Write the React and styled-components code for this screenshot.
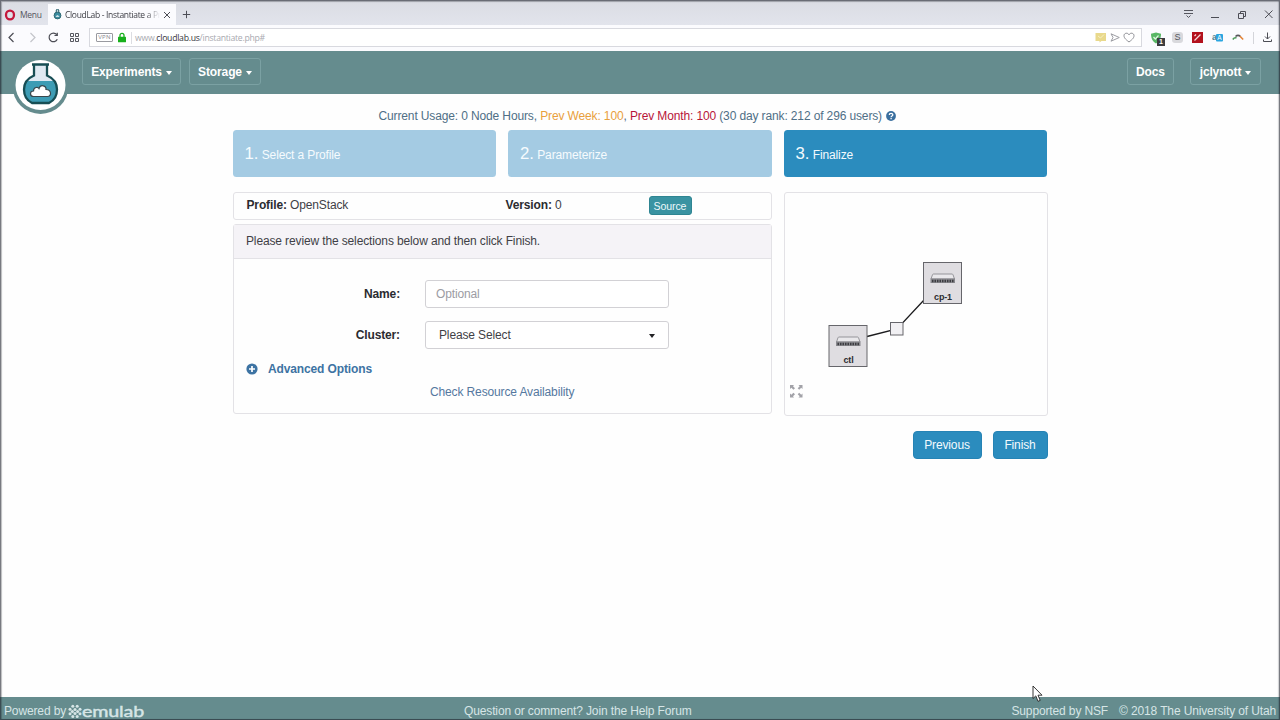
import styled, { createGlobalStyle, css } from "styled-components";

const GlobalStyle = createGlobalStyle`
  * {
    box-sizing: border-box;
  }

  body {
    margin: 0;
    overflow: hidden;
    font-family: "Liberation Sans", Arial, sans-serif;
    font-size: 12px;
    letter-spacing: -0.13px;
    color: #3f3f46;
  }

  button,
  input {
    letter-spacing: inherit;
  }

  svg {
    display: block;
    flex-shrink: 0;
  }
`;

const Window = styled.div`
  width: 1280px;
  height: 720px;
  display: flex;
  flex-direction: column;
  position: relative;
  background-color: #fefefe;
  &::after {
    content: "";
    position: absolute;
    inset: 0;
    pointer-events: none;
    border: solid rgba(30, 34, 44, 0.6);
    border-width: 1px;
    box-shadow: inset 1px 1px 1px rgba(30, 34, 44, 0.3),
      inset -1px 0 1px rgba(30, 34, 44, 0.2);
  }
`;

const TitleBar = styled.div`
  height: 25px;
  padding-top: 4px;
  display: flex;
  align-items: stretch;
  background: linear-gradient(#dadce3, #e2e4ec);
  font-family: "Open Sans", sans-serif;
  font-size: 8.5px;
  letter-spacing: -0.32px;
  color: #55565e;
`;

const MenuButton = styled.div`
  width: 48px;
  padding: 0 0 0 4px;
  display: flex;
  align-items: center;
  gap: 4px;
`;

const Tab = styled.div`
  width: 128px;
  padding: 0 6px 0 5px;
  display: flex;
  align-items: center;
  gap: 3px;
  background-color: #fbfbfe;
  color: #3c3d44;
`;

const TabTitle = styled.span`
  width: 95px;
  flex-shrink: 0;
  white-space: nowrap;
  mask-image: linear-gradient(to right, #000 85%, transparent);
`;

const NewTab = styled.div`
  padding-left: 6px;
  display: flex;
  align-items: center;
`;

const WindowButtons = styled.div`
  margin-left: auto;
  padding-right: 5px;
  display: flex;
  align-items: center;
  gap: 15px;
`;

const AddressBar = styled.div`
  height: 26px;
  padding: 2px 6px 3px 6px;
  display: flex;
  align-items: center;
  background-color: #fbfbfe;
`;

const NavIcons = styled.div`
  width: 83px;
  display: flex;
  align-items: center;
  gap: 10px;
`;

const UrlField = styled.div`
  width: 1053px;
  height: 19px;
  padding: 0 6px;
  display: flex;
  align-items: center;
  gap: 4px;
  border: 1px solid #d8d9df;
  background-color: #fff;
  font-family: "Open Sans", sans-serif;
  font-size: 8.7px;
  letter-spacing: -0.28px;
  color: #a8a9af;
`;

const Vpn = styled.span`
  width: 17px;
  height: 9px;
  border: 1px solid #999aa0;
  border-radius: 1px;
  font-size: 6px;
  line-height: 7px;
  letter-spacing: 0.3px;
  text-align: center;
  color: #85868c;
`;

const Url = styled.span`
  padding-left: 3px;
  border-left: 1px solid #dcdde2;
  line-height: 12px;
`;

const Domain = styled.span`
  color: #35363c;
`;

const FieldIcons = styled.div`
  margin-left: auto;
  display: flex;
  align-items: center;
  gap: 3px;
`;

const Extensions = styled.div`
  margin-left: auto;
  display: flex;
  align-items: center;
  gap: 9px;
`;

const Shield = styled.div`
  position: relative;
`;

const ShieldBadge = styled.span`
  position: absolute;
  left: 6px;
  top: 6px;
  width: 8px;
  height: 8px;
  background-color: #3c3c40;
  color: #fff;
  font-size: 7px;
  font-weight: 700;
  line-height: 8px;
  text-align: center;
`;

const Extension = styled.span`
  width: 11px;
  height: 11px;
  border-radius: ${(props) => (props.$round ? "3px" : "0")};
  background-color: ${(props) => props.$bg};
  color: ${(props) => props.$color};
  font-size: 9px;
  line-height: 11px;
  text-align: center;
`;

const Separator = styled.span`
  width: 1px;
  height: 12px;
  background-color: #d4d5da;
`;

const Navbar = styled.nav`
  height: 43px;
  padding: 7px 19px 0 82px;
  position: relative;
  display: flex;
  align-items: flex-start;
  gap: 8px;
  background-color: #658c8e;
`;

const Logo = styled.svg`
  position: absolute;
  left: 12px;
  top: 6px;
`;

const NavButton = styled.button`
  width: ${(props) => props.$width}px;
  height: 27px;
  padding: 0;
  margin-left: ${(props) => props.$offset || "0"};
  display: flex;
  align-items: center;
  justify-content: center;
  gap: 4px;
  border: 1px solid #7ba1a3;
  border-radius: 3px;
  background: none;
  color: #fff;
  font-family: inherit;
  font-size: 12px;
  font-weight: 700;
`;

const Caret = styled.span`
  margin-top: 2px;
  border: solid transparent;
  border-width: 4px 3px 0;
  border-top-color: ${(props) => props.$color || "#fff"};
`;

const Main = styled.main`
  flex: 1;
  width: 815px;
  margin-left: 232.5px;
  padding-top: 14.5px;
`;

const Usage = styled.div`
  margin: 0 0 6.5px 146px;
  height: 15px;
  display: flex;
  align-items: center;
  white-space: pre;
  color: #4f6f86;
`;

const UsageAmount = styled.span`
  color: ${(props) => props.$color};
`;

const HelpIcon = styled.svg`
  margin-left: 4px;
`;

const Steps = styled.div`
  display: grid;
  grid-template-columns: repeat(3, 263.5px);
  column-gap: 12px;
`;

const Step = styled.div`
  height: 47px;
  padding: 0 12px;
  border-radius: 3.5px;
  background-color: ${(props) => (props.$active ? "#2b8cbe" : "#a4cbe3")};
  color: ${(props) => (props.$active ? "#f4fafd" : "#f6fbfe")};
  line-height: 47px;
`;

const StepNumber = styled.span`
  font-size: 16.8px;
  margin-right: 3.5px;
`;

const Columns = styled.div`
  margin-top: 15px;
  display: flex;
  align-items: flex-start;
  gap: 12px;
`;

const box = css`
  border: 1px solid #e3e2e6;
  border-radius: 3px;
`;

const FormColumn = styled.div`
  width: 539px;
  display: flex;
  flex-direction: column;
  gap: 4px;
`;

const ProfileBar = styled.div`
  ${box}
  height: 28px;
  padding: 0 13px;
  display: grid;
  grid-template-columns: 259px 144px auto;
  justify-items: start;
  line-height: 24px;
`;

const Strong = styled.strong`
  color: #2b2b30;
`;

const SourceButton = styled.button`
  width: 43px;
  height: 19px;
  margin: 3px 0 0 -1px;
  padding: 0;
  border: 1px solid #2f8592;
  border-radius: 3px;
  background-color: #3a93a2;
  color: #eef8fa;
  font-family: inherit;
  font-size: 10.6px;
`;

const Panel = styled.section`
  ${box}
  height: 190px;
`;

const PanelHeader = styled.div`
  height: 34px;
  padding-left: 12.5px;
  border-bottom: 1px solid #e3e2e6;
  background-color: #f5f3f7;
  line-height: 33px;
`;

const FormRow = styled.div`
  height: 28px;
  margin-top: ${(props) => props.$gap}px;
  display: grid;
  grid-template-columns: 166.5px 244px;
  column-gap: 25px;
  align-items: center;
`;

const Label = styled.label`
  text-align: right;
  font-weight: 700;
  color: #2b2b30;
`;

const NameInput = styled.input`
  ${box}
  height: 28px;
  padding: 0 10px;
  border-color: #d2d1d5;
  background-color: #fff;
  font-family: inherit;
  font-size: 12px;
  outline: none;
  &::placeholder {
    color: #9c9ca3;
  }
`;

const ClusterSelect = styled.div`
  ${box}
  height: 28px;
  padding: 0 13.5px 0 13px;
  display: flex;
  align-items: center;
  justify-content: space-between;
  border-color: #d2d1d5;
  background-color: #fff;
`;

const AdvancedOptions = styled.div`
  margin: 12px 0 0 12.5px;
  height: 15px;
  display: flex;
  align-items: center;
  gap: 10px;
  font-weight: 700;
  color: #3d73a3;
`;

const AvailabilityLink = styled.div`
  margin: 9px 0 0 196.5px;
  line-height: 14px;
  color: #55789f;
`;

const Topology = styled.div`
  ${box}
  width: 264px;
  height: 224px;
`;

const Actions = styled.div`
  margin-top: 15px;
  display: flex;
  justify-content: flex-end;
  gap: 11px;
`;

const ActionButton = styled.button`
  width: ${(props) => props.$width}px;
  height: 28px;
  padding: 0;
  border: 1px solid #2583b5;
  border-radius: 4px;
  background-color: #2b8cbe;
  color: #f4fafd;
  font-family: inherit;
  font-size: 12px;
`;

const Footer = styled.footer`
  height: 23px;
  padding: 4px 4px 0;
  display: grid;
  grid-template-columns: 460px 1fr auto auto;
  align-items: center;
  background-color: #658c8e;
  color: #d6e5e6;
  line-height: 18px;
`;

const PoweredBy = styled.div`
  display: flex;
  align-items: center;
  gap: 2px;
`;

const Copyright = styled.span`
  margin-left: 11px;
`;

const Cursor = styled.svg`
  position: absolute;
  left: 1032px;
  top: 685px;
`;

const nodes = [
  { name: "cp-1", x: 138.5, y: 69.5 },
  { name: "ctl", x: 44, y: 132.5 },
];

function ServerNode({ name, x, y }) {
  return (
    <g transform={`translate(${x} ${y})`}>
      <rect width="38" height="41" fill="#dfdde1" stroke="#66666b" />
      <path
        d="M7.5 16.5 L9 12.2 Q9.3 11.5 10 11.5 H28.5 Q29.2 11.5 29.5 12.2 L31 16.5 Z"
        fill="#e9e8eb"
        stroke="#8d8d92"
        strokeWidth="0.9"
      />
      <rect x="7" y="16" width="24.5" height="4.5" fill="#88888d" />
      <path
        d="M8.5 18.5 H30.5"
        stroke="#3c3c41"
        strokeWidth="2.5"
        strokeDasharray="1.5 1"
      />
      <text
        x="19.5"
        y="37.8"
        textAnchor="middle"
        fontSize="9"
        fontWeight="700"
        fill="#2c2c30"
      >
        {name}
      </text>
    </g>
  );
}

function TopologyView() {
  return (
    <Topology>
      <svg width="262" height="222">
        <path
          d="M82 143.5 L112 136 L139 107"
          fill="none"
          stroke="#1c1c1e"
          strokeWidth="1.3"
        />
        <rect
          x="105.5"
          y="129.5"
          width="12.5"
          height="12.5"
          fill="#f1f0f3"
          stroke="#66666b"
        />
        {nodes.map((node) => (
          <ServerNode key={node.name} {...node} />
        ))}
        <g fill="#a2a2a8" transform="translate(4.5 191.5)">
          <path d="M0.5 0.5 H4.5 L3.5 1.7 L5.5 3.7 L3.9 5.2 L1.9 3.2 L0.5 4.5 Z" />
          <path d="M13 0.5 V4.5 L11.7 3.2 L9.7 5.2 L8.2 3.7 L10.2 1.7 L9 0.5 Z" />
          <path d="M0.5 13 V9 L1.9 10.3 L3.9 8.3 L5.5 9.8 L3.5 11.8 L4.5 13 Z" />
          <path d="M13 13 H9 L10.2 11.8 L8.2 9.8 L9.7 8.3 L11.7 10.3 L13 9 Z" />
        </g>
      </svg>
    </Topology>
  );
}

function CloudLabLogo() {
  return (
    <Logo width="57" height="58" viewBox="0 0 57 58">
      <circle cx="28.5" cy="29" r="28" fill="#658c8e" />
      <circle cx="28.5" cy="28" r="25" fill="#fff" />
      <path
        d="M22 7.5 V18.5 C15 21.5 12 27 12 32.5 C12 38.5 15 43.5 20 46 H37 C42 43.5 45 38.5 45 32.5 C45 27 42 21.5 35 18.5 V7.5 Z"
        fill="#dfe9f2"
      />
      <path
        d="M13.5 24 H43.5 C47 34 44 42 37 46 H20 C13 42 10 34 13.5 24 Z"
        fill="#3d9cb4"
      />
      <path
        d="M22 8 V18.5 C15 21.5 12 27 12 32.5 C12 38.5 15 43.5 20 46 H37 C42 43.5 45 38.5 45 32.5 C45 27 42 21.5 35 18.5 V8 M20 7.5 H37"
        fill="none"
        stroke="#174e54"
        strokeWidth="2.3"
      />
      <path
        d="M21.5 39.5 C17.5 39.5 17.5 34 21.5 34 C21.5 30 26 29.5 27 31.5 C28.5 27 34.5 28.5 34 32.5 C39.5 32.5 40 39.5 35.5 39.5 Z"
        fill="#fff"
        stroke="#39474c"
        strokeWidth="1.2"
      />
    </Logo>
  );
}

function BrowserTabs() {
  return (
    <TitleBar>
      <MenuButton>
        <svg width="12" height="12" viewBox="0 0 12 12">
          <ellipse cx="6" cy="6" rx="4" ry="4.4" fill="none" stroke="#c4183c" strokeWidth="2.3" />
        </svg>
        Menu
      </MenuButton>
      <Tab>
        <svg width="9" height="11" viewBox="0 0 9 11">
          <path d="M3 0.8 H6 M3.3 1 V3.5 M5.7 1 V3.5" stroke="#2f6873" strokeWidth="1.1" />
          <circle cx="4.5" cy="6.5" r="3.4" fill="#3b8ba0" stroke="#2f6873" />
          <path d="M2.5 7.8 Q4.5 4.8 6.5 7.8 Z" fill="#fff" />
        </svg>
        <TabTitle>CloudLab - Instantiate a Pr</TabTitle>
        <svg width="8" height="8" viewBox="0 0 8 8">
          <path d="M1 1 L7 7 M7 1 L1 7" stroke="#4c4d55" />
        </svg>
      </Tab>
      <NewTab>
        <svg width="9" height="9" viewBox="0 0 9 9">
          <path d="M4.5 0.8 V8.2 M0.8 4.5 H8.2" stroke="#4c4d55" />
        </svg>
      </NewTab>
      <WindowButtons>
        <svg width="12" height="12" viewBox="0 0 12 12" fill="none" stroke="#55565e">
          <path d="M0 1.5 H9 M0 4.5 H9 M2.5 6.5 L4.5 8.5 L6.5 6.5" />
        </svg>
        <svg width="10" height="12" viewBox="0 0 10 12">
          <path d="M0 8.5 H8" stroke="#4c4d55" />
        </svg>
        <svg width="12" height="12" viewBox="0 0 12 12" fill="none" stroke="#4c4d55">
          <path d="M2.5 4.5 H7.5 V9.5 H2.5 Z M4.5 4 V2.5 H9.5 V7.5 H8" />
        </svg>
        <svg width="12" height="12" viewBox="0 0 12 12">
          <path d="M2 1.5 L9.5 9 M9.5 1.5 L2 9" stroke="#4c4d55" />
        </svg>
      </WindowButtons>
    </TitleBar>
  );
}

function BrowserAddress() {
  return (
    <AddressBar>
      <NavIcons>
        <svg width="11" height="11" viewBox="0 0 11 11" fill="none" stroke="#4c4d55" strokeWidth="1.2">
          <path d="M7.5 1 L3 5.5 L7.5 10" />
        </svg>
        <svg width="11" height="11" viewBox="0 0 11 11" fill="none" stroke="#c3c4ca" strokeWidth="1.2">
          <path d="M3.5 1 L8 5.5 L3.5 10" />
        </svg>
        <svg width="11" height="11" viewBox="0 0 11 11" fill="none" stroke="#4c4d55" strokeWidth="1.2">
          <path d="M9.3 7.3 A4.3 4.3 0 1 1 8.8 2.7 M9.3 0.8 V3.5 H6.5" />
        </svg>
        <svg width="11" height="11" viewBox="0 0 11 11" fill="none" stroke="#55565e">
          <path d="M1.5 1.5 H4.5 V4.5 H1.5 Z M6.5 1.5 H9.5 V4.5 H6.5 Z M1.5 6.5 H4.5 V9.5 H1.5 Z M6.5 6.5 H9.5 V9.5 H6.5 Z" />
        </svg>
      </NavIcons>
      <UrlField>
        <Vpn>VPN</Vpn>
        <svg width="10" height="11" viewBox="0 0 10 11">
          <path d="M3 5 V3.3 A2 2 0 0 1 7 3.3 V5" fill="none" stroke="#18b01c" strokeWidth="1.3" />
          <rect x="1" y="4.8" width="8" height="5.4" rx="0.5" fill="#18b01c" />
        </svg>
        <Url>
          www.<Domain>cloudlab.us</Domain>/instantiate.php#
        </Url>
        <FieldIcons>
          <svg width="12" height="11" viewBox="0 0 12 11">
            <path d="M1.5 1 H12 V9 H7.5 L5.5 10.5 V9 H1.5 Z" fill="#e9d98c" />
            <path d="M4 4 L6.5 6 L10 2.5" fill="none" stroke="#f8f0c4" />
          </svg>
          <svg width="11" height="11" viewBox="0 0 11 11" fill="none" stroke="#9c9da3">
            <path d="M2 1.8 L10.3 5.5 L2 9.2 L4 5.5 Z" />
          </svg>
          <svg width="12" height="11" viewBox="0 0 12 11" fill="none" stroke="#8f9096">
            <path d="M6 10 C2 7 1 5.5 1 3.6 C1 1 4.7 0.2 6 2.8 C7.3 0.2 11 1 11 3.6 C11 5.5 10 7 6 10 Z" />
          </svg>
        </FieldIcons>
      </UrlField>
      <Extensions>
        <Shield>
          <svg width="12" height="12" viewBox="0 0 12 12">
            <path d="M5 0.5 L10 1.8 C10 7 8 10 5 11.5 C2 10 0 7 0 1.8 Z" fill="#58b765" />
            <path d="M2.5 5 L4.3 7 L7.5 3.5" fill="none" stroke="#dff3e1" strokeWidth="1.2" />
          </svg>
          <ShieldBadge>1</ShieldBadge>
        </Shield>
        <Extension $bg="#d9d9dd" $color="#55565c" $round>
          S
        </Extension>
        <svg width="11" height="11" viewBox="0 0 11 11">
          <rect width="11" height="11" fill="#b3111d" />
          <path d="M2.5 8.5 L8.5 2.5 M2.5 4 L4 2.5" stroke="#f6dcdd" strokeWidth="1.3" />
        </svg>
        <svg width="11" height="11" viewBox="0 0 11 11">
          <rect x="4" y="2" width="7" height="7.5" rx="1" fill="#2ba6e0" />
          <text x="0" y="8" fontSize="8.5" fontWeight="700" fill="#4a8291">a</text>
          <text x="5.2" y="8.3" fontSize="6.5" fill="#fff">A</text>
        </svg>
        <svg width="12" height="11" viewBox="0 0 12 11" fill="none" strokeWidth="1.6">
          <path d="M0.8 7.5 Q2.5 5 4.5 6" stroke="#4d9a5a" />
          <path d="M3.5 4.5 Q6 2.3 8.5 4.5" stroke="#57575c" />
          <path d="M8 4.2 L11.2 7.5" stroke="#e38336" />
        </svg>
        <Separator />
        <svg width="11" height="11" viewBox="0 0 11 11" fill="none" stroke="#4c4d55">
          <path d="M4.5 0.5 V7 M2 4.5 L4.5 7 L7 4.5 M0.5 7.5 V9.5 H8.5 V7.5" />
        </svg>
      </Extensions>
    </AddressBar>
  );
}

function EmulabLogo() {
  const dots = [
    [4.8, 2.2], [9.2, 2.2], [2, 5.2], [7, 5.4], [12, 5.2], [4.4, 7.4],
    [9.6, 7.4], [2, 9.8], [7, 9.4], [12, 9.8], [4.8, 12.4], [9.2, 12.4],
  ];
  return (
    <svg width="78" height="18" viewBox="0 0 78 18" fill="#d6e5e6">
      {dots.map(([cx, cy]) => (
        <circle key={`${cx}-${cy}`} cx={cx} cy={cy + 2} r="1.5" />
      ))}
      <text
        x="14"
        y="15.2"
        textLength="62"
        lengthAdjust="spacingAndGlyphs"
        fontFamily="Lato"
        fontSize="15"
        stroke="#d6e5e6"
        strokeWidth="0.4"
      >
        emulab
      </text>
    </svg>
  );
}

export default function App() {
  return (
    <Window>
      <GlobalStyle />
      <BrowserTabs />
      <BrowserAddress />
      <Navbar>
        <CloudLabLogo />
        <NavButton $width={99}>
          Experiments <Caret />
        </NavButton>
        <NavButton $width={72}>
          Storage <Caret />
        </NavButton>
        <NavButton $width={47} $offset="auto">
          Docs
        </NavButton>
        <NavButton $width={71} $offset="8px">
          jclynott <Caret />
        </NavButton>
      </Navbar>
      <Main>
        <Usage>
          Current Usage: 0 Node Hours,{" "}
          <UsageAmount $color="#e9a03c">Prev Week: 100</UsageAmount>,{" "}
          <UsageAmount $color="#b8153a">Prev Month: 100</UsageAmount> (30 day
          rank: 212 of 296 users)
          <HelpIcon width="10" height="10" viewBox="0 0 10 10">
            <circle cx="5" cy="5" r="4.9" fill="#3a6f9f" />
            <path
              d="M3.3 3.9 C3.3 1.8 6.8 1.8 6.8 3.9 C6.8 5 5.1 4.9 5.1 6.2 M5.1 6.9 V8.2"
              fill="none"
              stroke="#fff"
              strokeWidth="1.3"
            />
          </HelpIcon>
        </Usage>
        <Steps>
          <Step>
            <StepNumber>1.</StepNumber>
            Select a Profile
          </Step>
          <Step>
            <StepNumber>2.</StepNumber>
            Parameterize
          </Step>
          <Step $active>
            <StepNumber>3.</StepNumber>
            Finalize
          </Step>
        </Steps>
        <Columns>
          <FormColumn>
            <ProfileBar>
              <span>
                <Strong>Profile:</Strong> OpenStack
              </span>
              <span>
                <Strong>Version:</Strong> 0
              </span>
              <SourceButton>Source</SourceButton>
            </ProfileBar>
            <Panel>
              <PanelHeader>
                Please review the selections below and then click Finish.
              </PanelHeader>
              <FormRow $gap={21}>
                <Label>Name:</Label>
                <NameInput placeholder="Optional" />
              </FormRow>
              <FormRow $gap={13}>
                <Label>Cluster:</Label>
                <ClusterSelect>
                  Please Select
                  <Caret $color="#222226" />
                </ClusterSelect>
              </FormRow>
              <AdvancedOptions>
                <svg width="12" height="12" viewBox="0 0 12 12">
                  <circle cx="6" cy="6" r="5.6" fill="#3d73a3" />
                  <path d="M6 3 V9 M3 6 H9" stroke="#fff" strokeWidth="1.7" />
                </svg>
                Advanced Options
              </AdvancedOptions>
              <AvailabilityLink>Check Resource Availability</AvailabilityLink>
            </Panel>
          </FormColumn>
          <TopologyView />
        </Columns>
        <Actions>
          <ActionButton $width={69}>Previous</ActionButton>
          <ActionButton $width={55}>Finish</ActionButton>
        </Actions>
      </Main>
      <Footer>
        <PoweredBy>
          Powered by
          <EmulabLogo />
        </PoweredBy>
        <span>Question or comment? Join the Help Forum</span>
        <span>Supported by NSF</span>
        <Copyright>© 2018 The University of Utah</Copyright>
      </Footer>
      <Cursor width="12" height="18" viewBox="0 0 12 18">
        <path
          d="M1 1 V13.5 L3.8 10.9 L6 16.3 L8.2 15.4 L6 10.2 H10 Z"
          fill="#fff"
          stroke="#222"
          strokeWidth="0.9"
        />
      </Cursor>
    </Window>
  );
}
